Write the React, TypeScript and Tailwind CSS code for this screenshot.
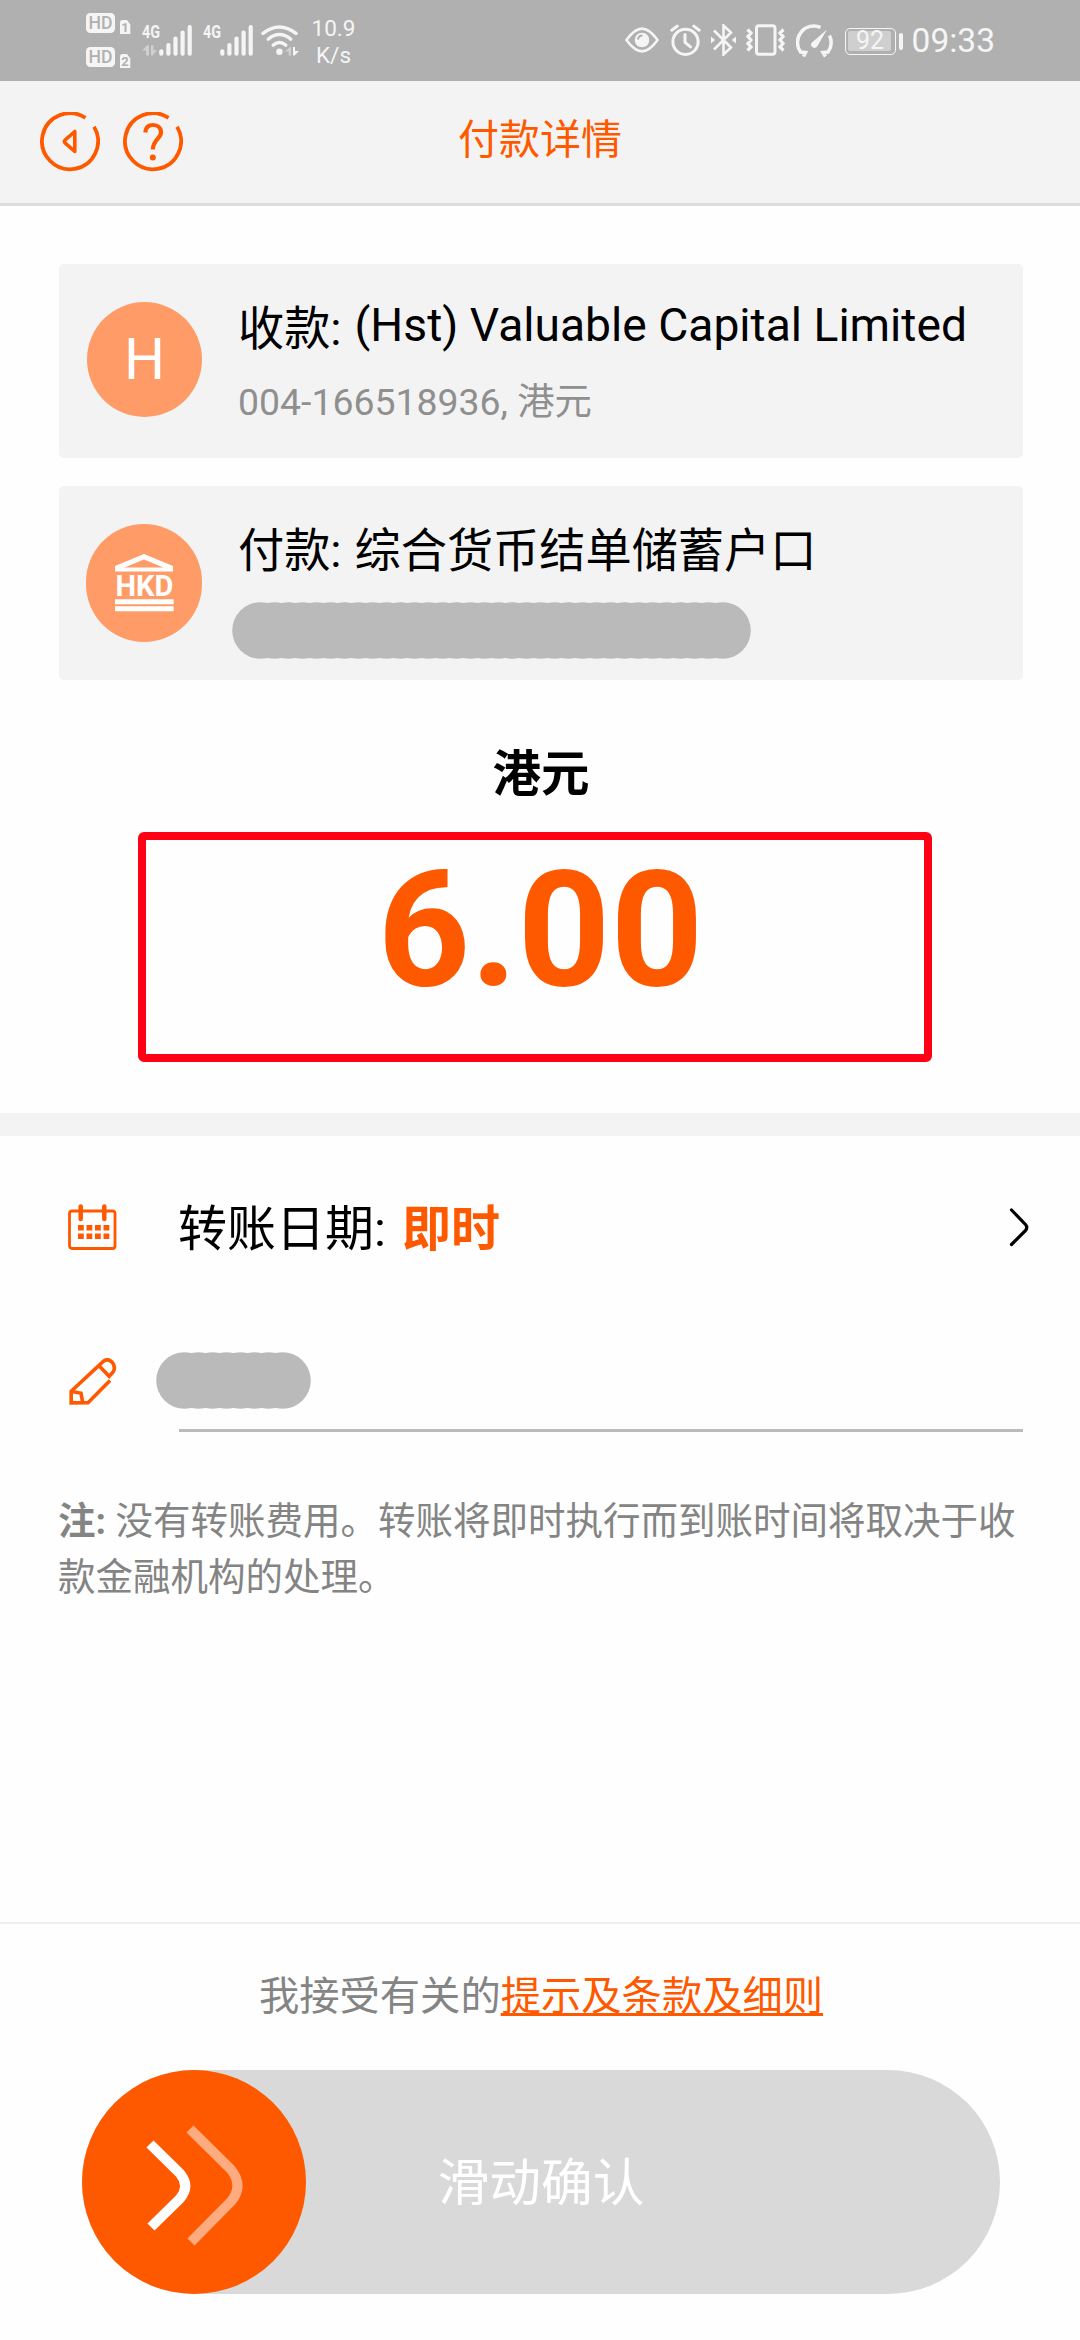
const ORANGE = "#ff5900";

function HdBadge({ sim }: { sim: string }) {
  return (
    <svg className="overflow-visible" width="45" height="21" viewBox="0 0 45 21">
      <rect x="0" y="0" width="29" height="20" rx="4.5" fill="#f5f5f5" />
      <text x="14.5" y="16.3" textAnchor="middle" textLength="24" lengthAdjust="spacingAndGlyphs" fontSize="18" fontWeight="500" fontFamily="Roboto, sans-serif" fill="#b0b0b0">HD</text>
      <path d="M34 9.5V21h10.3V11.5L41 7h-5q-2 0-2 2.500z" fill="#f5f5f5" />
      <text x="39" y="19.2" textAnchor="middle" fontSize="13" fontWeight="700" fontFamily="Roboto, sans-serif" fill="#b0b0b0">{sim}</text>
    </svg>
  );
}

function Signal({ arrows }: { arrows?: boolean }) {
  const tops = [24.3, 18, 11.6, 5.4, 0];
  return (
    <svg className="overflow-visible" width="50" height="31" viewBox="0 0 50 31">
      <text x="0" y="13.4" fontSize="19" fontWeight="700" textLength="18" lengthAdjust="spacingAndGlyphs" fontFamily="Roboto, sans-serif" fill="#f5f5f5">4G</text>
      {arrows && (
        <g fill="#cfcfcf">
          <path d="M0.2 25.5L5 20.3h2V30.5H4v-5z" />
          <path d="M9 20.3h2.6v5h3.2L10.5 30.5H9z" />
        </g>
      )}
      {tops.map((t, i) => (
        <rect key={i} x={17.2 + i * 7.1} y={t} width="4.2" height={30.8 - t} rx="2" fill="#f5f5f5" />
      ))}
    </svg>
  );
}

function Wifi() {
  return (
    <svg width="38" height="31" viewBox="0 0 38 31" fill="none" stroke="#f5f5f5" strokeWidth="3.4" strokeLinecap="round">
      <path d="M2 8.4Q18.4 -4.400 35 8.400" />
      <path d="M7.2 14.2Q18.4 5 29.8 14.2" />
      <path d="M12.2 20.1Q18.4 15 24.8 20.1" />
      <circle cx="18.4" cy="26.8" r="3.2" fill="#f5f5f5" stroke="none" />
      <path d="M24 26.4L29 22h1v8.5h-2.4v-4z" fill="#cfcfcf" stroke="none" />
      <path d="M32 22h2v4h4l-4.5 4.6H32z" fill="#f5f5f5" stroke="none" />
    </svg>
  );
}

function StatusBar() {
  return (
    <header className="flex h-[81px] items-start bg-[#b0b0b0] text-[#f5f5f5]">
      <div className="ml-[86px] mt-[13px] flex flex-col gap-[13px]">
        <HdBadge sim="1" />
        <HdBadge sim="2" />
      </div>
      <div className="ml-[11px] mt-[25px] flex">
        <Signal arrows />
        <div className="w-[11px]" />
        <Signal />
      </div>
      <div className="ml-[8px] mt-[25px]"><Wifi /></div>
      <div className="ml-[12px] mt-[15px] w-[45px] text-center text-[22.5px] leading-[27px]">
        <div>10.9</div>
        <div>K/s</div>
      </div>
      <div className="ml-auto mr-[85px] mt-[24px] flex items-start">
        <svg className="mt-[3px]" width="34" height="26" viewBox="0 0 34 26" fill="none" stroke="#f5f5f5" strokeWidth="2.6">
          <path d="M1.4 13C8 4 13 1.6 17 1.6S26 4 32.6 13C26 22 21 24.4 17 24.4S8 22 1.4 13z" strokeLinejoin="round" />
          <circle cx="17" cy="13" r="7.3" fill="#f5f5f5" stroke="none" />
          <path d="M13 12.5a4.6 4.6 0 0 1 4.4-4" stroke="#b0b0b0" strokeWidth="2" />
        </svg>
        <svg className="ml-[11px]" width="31" height="32" viewBox="0 0 31 32" fill="none" stroke="#f5f5f5" strokeWidth="3">
          <circle cx="15.5" cy="17.8" r="12.6" />
          <path d="M15 10.5v7.8l5.5 4.5" strokeLinecap="round" strokeLinejoin="round" />
          <path d="M1.8 6.2L7.2 2.1M29.2 6.2L23.8 2.1" strokeLinecap="round" />
        </svg>
        <svg className="ml-[10px]" width="25" height="32" viewBox="0 0 25 32" fill="none" stroke="#f5f5f5" strokeWidth="2.6">
          <path d="M3 6.5L20 23.5L12.5 30.5V1.5L20 8.5L3 25.5" />
          <path d="M0 12.5l4.2 3.5L0 19.5zM25 12.5L20.8 16l4.2 3.5z" fill="#f5f5f5" stroke="none" />
        </svg>
        <svg className="ml-[10px]" width="39" height="32" viewBox="0 0 39 32" fill="none" stroke="#f5f5f5" strokeWidth="3">
          <rect x="10.5" y="1.7" width="18.5" height="28.6" rx="2.5" />
          <path d="M1.5 5.5l3.5 3.500l-3 3.500l3 3.500l-3 3.500l3 3.500l-3.500 3.500M37.500 5.500l-3.500 3.500l3 3.500l-3 3.500l3 3.500l-3 3.500l3.500 3.500" strokeWidth="3.200" />
        </svg>
        <svg className="ml-[11px]" width="37" height="34" viewBox="0 0 37 34" fill="none" stroke="#f5f5f5" strokeWidth="3.5">
          <path d="M7.5 32.5L9.5 28.5L4.5 28A16.500 16.500 0 0 1 24.500 3.300" />
          <path d="M33.5 11.5A16.500 16.500 0 0 1 32 28L27 28.500L29.500 32.500" />
          <path d="M31 5.5L21.3 22.3a3.300 3.300 0 1 1 -5.600 -3.600z" fill="#f5f5f5" stroke="none" />
        </svg>
        <div className="ml-[12px] mt-[4px] flex items-center">
          <div className="h-[27px] w-[51px] rounded-[5px] border-[1.5px] border-[#f5f5f5] p-[2px]">
            <div className="flex h-[20px] w-[43px] items-center justify-center rounded-[2px] bg-[#cfcfcf] pl-[2px] text-[25px] leading-[20px]">92</div>
          </div>
          <div className="ml-[3px] h-[17px] w-[4px] rounded-[2px] bg-[#f5f5f5]" />
        </div>
        <div className="ml-[9px] text-[33.5px] leading-[34px]">09:33</div>
      </div>
    </header>
  );
}

function TitleBar() {
  return (
    <nav className="grid h-[125px] grid-cols-[1fr_auto_1fr] border-b-[3px] border-[#dcdcdc] bg-[#f3f3f3]">
      <div className="flex items-center gap-[23px] pb-[1px] pl-[40px]">
        <svg width="60" height="60" viewBox="0 0 60 60" fill="none" stroke={ORANGE} strokeWidth="3.8">
          <path d="M45.5 5.9A28 28 0 1 0 54 14.8" />
          <path d="M34.8 19.5V39.5L25 30.8Q23.8 29.5 25 28.2Z" strokeWidth="3.6" strokeLinejoin="round" />
        </svg>
        <svg width="60" height="60" viewBox="0 0 60 60" fill="none" stroke={ORANGE} strokeWidth="3.8">
          <path d="M45.5 5.9A28 28 0 1 0 54 14.8" />
          <path d="M22.3 20.5C22.600 15.500 25.500 13 30 13C35 13 38 16 38 20.500C38 26 29.800 28 29.800 37.500" strokeWidth="4.2" />
          <circle cx="29.8" cy="45.5" r="3" fill={ORANGE} stroke="none" />
        </svg>
      </div>
      <h1 className="text-[41px] leading-[118px] text-[#ff5900]">付款详情</h1>
      <div />
    </nav>
  );
}

/** Row of overlapping discs hiding private text. */
function Redaction({ steps, className }: { steps: number; className: string }) {
  const w = steps * 14 + 57;
  return (
    <svg className={className} width={w} height="57" viewBox={`0 0 ${w} 57`} fill="#bababa">
      {Array.from({ length: steps + 1 }, (_, i) => (
        <circle key={i} cx={28.5 + i * 14} cy="28.5" r="28.3" />
      ))}
    </svg>
  );
}

function Parties() {
  return (
    <section className="mt-[58px] flex flex-col gap-[28px] pl-[59px] pr-[57px]">
      <div className="flex h-[194px] rounded-[5px] bg-[#f3f3f3]">
        <div className="ml-[28px] mt-[38px] flex size-[115px] items-center justify-center rounded-full bg-[#ff9b67] text-[57.5px] leading-none text-white">H</div>
        <div className="ml-[36px]">
          <div className="flex whitespace-pre text-[46.2px] leading-[54px] text-black">
            <span className="mt-[38px]">收款:</span>
            <span className="ml-[13px] mt-[34px]">(Hst) Valuable Capital Limited</span>
          </div>
          <div className="mt-[24px] text-[37.4px] leading-[44px] text-[#8f8f8f]">004-166518936, 港元</div>
        </div>
      </div>
      <div className="flex h-[194px] rounded-[5px] bg-[#f3f3f3]">
        <svg className="ml-[27px] mt-[38px]" width="116" height="118" viewBox="0 0 116 118">
          <rect width="116" height="118" rx="58" ry="58" fill="#ff9b67" />
          <path fillRule="evenodd" fill="white" d="M58 30L87 42V47.5H29V42ZM58 35.5L38.5 43.5H77.5Z" />
          <text x="58.5" y="72" textAnchor="middle" textLength="58" lengthAdjust="spacingAndGlyphs" fontSize="29" fontWeight="700" fontFamily="Roboto, sans-serif" fill="white">HKD</text>
          <path fill="white" d="M29 75.3H87.7V80.2H29zM29 82.2H87.7V87.2H29z" />
        </svg>
        <div className="ml-[30px]">
          <div className="ml-[6px] mt-[38px] flex text-[46.2px] leading-[54px] text-black">
            <span>付款:</span>
            <span className="ml-[13px]">综合货币结单储蓄户口</span>
          </div>
          <Redaction steps={33} className="mt-[24px]" />
        </div>
      </div>
    </section>
  );
}

function Amount() {
  return (
    <section className="flex h-[433px] flex-col items-center">
      <h2 className="ml-[2px] mt-[65px] text-[48.5px] font-bold leading-[60px] text-black">港元</h2>
      <div className="mr-[10px] mt-[27px] flex h-[230px] w-[794px] justify-center rounded-[6px] border-8 border-[#ff0015] pl-[11px]">
        <span className="text-[162px] font-bold leading-[181px] text-[#ff5900]">6.00</span>
      </div>
    </section>
  );
}

function Details() {
  return (
    <section className="border-t-[23px] border-[#f3f3f3]">
      <div className="flex h-[182px] items-center pl-[68px] pr-[49px]">
        <svg width="49" height="46" viewBox="0 0 49 46" fill="none" stroke={ORANGE}>
          <rect x="1.5" y="7" width="45.5" height="37.5" rx="2.5" strokeWidth="2.8" />
          <path d="M12.7 2.5V15M36.3 2.500V15" strokeWidth="4.5" strokeLinecap="round" />
          <path d="M10 23.8H41.5M10 32.2H41.5" strokeWidth="5.6" strokeDasharray="5.8 2.700" />
        </svg>
        <div className="ml-[61px] mt-[5px] flex flex-1 text-[49px] leading-[60px] text-black">
          <span>转账日期:</span>
          <span className="ml-[16px] font-bold text-[#ff5900]">即时</span>
        </div>
        <svg width="22" height="40" viewBox="0 0 22 40" fill="none" stroke="black" strokeWidth="3.2" strokeLinecap="round" strokeLinejoin="round">
          <path d="M2.500 3L16.500 17.500Q19 20.500 16.500 23.500L2.500 37.500" />
        </svg>
      </div>
      <div className="flex items-start pl-[68px]">
        <svg className="mt-[40px]" width="49" height="48" viewBox="0 0 49 48" fill="none" stroke={ORANGE} strokeWidth="3.6">
          <path d="M42 22.5L20 44.800L3.200 44.900V33.200L35 3.600Q39.500 -0.300 44 4Q48 8.600 45.300 13.700L41.200 18.300L31 7.800" />
          <path d="M4 33.5L13 35.200L14.500 43.500" />
        </svg>
        <Redaction steps={7} className="ml-[39px] mt-[34px]" />
      </div>
      <div className="ml-[179px] mr-[57px] mt-[20px] h-[3px] bg-[#bbbbbb]" />
      <p className="ml-[58px] mr-[50px] mt-[61px] text-[37.5px] leading-[56px] text-[#848484]">
        <b>注:</b> 没有转账费用。转账将即时执行而到账时间将取决于收款金融机构的处理。
      </p>
    </section>
  );
}

function Confirm() {
  return (
    <footer className="mt-auto h-[418px] border-t-2 border-[#eeeeee]">
      <p className="ml-[2px] mt-[41px] text-center text-[40.3px] leading-[64px] text-[#848484]">
        我接受有关的<a className="text-[#ff5900] underline decoration-[3px] underline-offset-[3px]">提示及条款及细则</a>
      </p>
      <div className="relative ml-[82px] mt-[41px] flex h-[224px] w-[918px] items-center justify-center rounded-full bg-[#d9d9d9]">
        <svg className="absolute left-0 top-0" width="224" height="224" viewBox="0 0 224 224" fill="none" strokeWidth="10">
          <circle cx="112" cy="112" r="112" fill={ORANGE} />
          <path d="M68 74L98 103.500Q108.500 116 98 128.500L69 157" stroke="white" />
          <path d="M108 59L149 99.500Q162 116 149 131.500L109 172" stroke="#ffab80" />
        </svg>
        <span className="mt-[4px] text-[51.7px] leading-[60px] text-white">滑动确认</span>
      </div>
    </footer>
  );
}

export default function App() {
  return (
    <div lang="zh-CN" className="flex h-[2340px] w-[1080px] flex-col overflow-hidden bg-[#fefefe] font-[Roboto,'Noto_Sans_CJK_SC',sans-serif]">
      <StatusBar />
      <TitleBar />
      <Parties />
      <Amount />
      <Details />
      <Confirm />
    </div>
  );
}
